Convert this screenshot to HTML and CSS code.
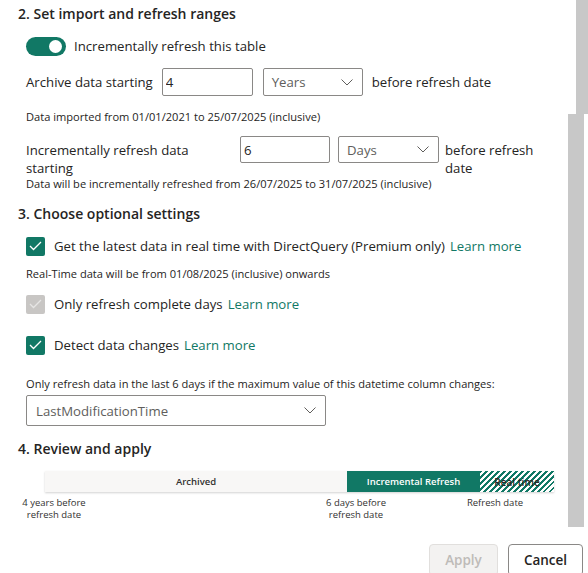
FILE: index.html
```html
<!DOCTYPE html>
<html lang="en">
<head>
  <meta charset="UTF-8">
  <meta name="viewport" content="width=device-width, initial-scale=1.0">
  <title>Incremental refresh and real-time data</title>
  <link rel="stylesheet" href="styles.css">
</head>
<body>

  <div class="panel">

    <!-- Step 2: ranges -->
    <h2 class="step step-first">2. Set import and refresh ranges</h2>

    <div class="toggle-row">
      <span class="toggle"><span class="knob"></span></span>
      <span>Incrementally refresh this table</span>
    </div>

    <div class="range-row">
      <label class="range-label">Archive data starting</label>
      <input type="text" class="num-input" value="4">
      <div class="dropdown dropdown-unit">
        <span>Years</span>
        <svg width="12" height="7" viewBox="0 0 12 7"><path d="M0.5 0.5 L6 6 L11.5 0.5" fill="none" stroke="#605e5c" stroke-width="1"/></svg>
      </div>
      <span class="after">before refresh date</span>
    </div>

    <p class="note note-archive">Data imported from 01/01/2021 to 25/07/2025 (inclusive)</p>

    <div class="range-row range-wrap">
      <label class="range-label wide">Incrementally refresh data starting</label>
      <input type="text" class="num-input" value="6">
      <div class="dropdown dropdown-unit">
        <span>Days</span>
        <svg width="12" height="7" viewBox="0 0 12 7"><path d="M0.5 0.5 L6 6 L11.5 0.5" fill="none" stroke="#605e5c" stroke-width="1"/></svg>
      </div>
      <span class="after narrow">before refresh date</span>
    </div>

    <p class="note note-incr">Data will be incrementally refreshed from 26/07/2025 to 31/07/2025 (inclusive)</p>

    <!-- Step 3: optional settings -->
    <h2 class="step">3. Choose optional settings</h2>

    <div class="check-row first-check">
      <span class="checkbox checked">
        <svg width="13" height="10" viewBox="0 0 13 10"><path d="M1 5 L4.5 8.5 L12 1" fill="none" stroke="#fff" stroke-width="1.3"/></svg>
      </span>
      <span>Get the latest data in real time with DirectQuery (Premium only)</span>
      <a class="learn">Learn more</a>
    </div>

    <p class="note note-rt">Real-Time data will be from 01/08/2025 (inclusive) onwards</p>

    <div class="check-row second-check">
      <span class="checkbox disabled">
        <svg width="13" height="10" viewBox="0 0 13 10"><path d="M1 5 L4.5 8.5 L12 1" fill="none" stroke="#e6e5e4" stroke-width="1.3"/></svg>
      </span>
      <span>Only refresh complete days</span>
      <a class="learn">Learn more</a>
    </div>

    <div class="check-row third-check">
      <span class="checkbox checked">
        <svg width="13" height="10" viewBox="0 0 13 10"><path d="M1 5 L4.5 8.5 L12 1" fill="none" stroke="#fff" stroke-width="1.3"/></svg>
      </span>
      <span>Detect data changes</span>
      <a class="learn">Learn more</a>
    </div>

    <p class="note note-col">Only refresh data in the last 6 days if the maximum value of this datetime column changes:</p>

    <div class="dropdown dropdown-column">
      <span>LastModificationTime</span>
      <svg width="12" height="7" viewBox="0 0 12 7"><path d="M0.5 0.5 L6 6 L11.5 0.5" fill="none" stroke="#605e5c" stroke-width="1"/></svg>
    </div>

    <!-- Step 4: timeline -->
    <h2 class="step">4. Review and apply</h2>

    <div class="timeline">
      <div class="seg seg-archived">Archived</div>
      <div class="seg seg-incr">Incremental Refresh</div>
      <div class="seg seg-rt">Real time</div>
    </div>

    <div class="marks">
      <span class="mark mark-1">4 years before refresh date</span>
      <span class="mark mark-2">6 days before refresh date</span>
      <span class="mark mark-3">Refresh date</span>
    </div>

    <div class="footer">
      <button class="btn btn-apply" disabled>Apply</button>
      <button class="btn btn-cancel">Cancel</button>
    </div>
  </div>

  <!-- dialog scrollbars -->
  <div class="scroll scroll-outer"></div>
  <div class="scroll scroll-inner"></div>

</body>
</html>
```

FILE: styles.css
```css
body {
  margin: 0;
  padding: 0;
  background-color: #fff;
  font-family: "Open Sans", "Noto Sans", sans-serif;
  color: #252423;
  font-size: 13.2px;
  overflow: hidden;
  height: 573px;
  position: relative;
}

.panel {
  padding-left: 18px;
  display: flex;
  flex-direction: column;
}

.step {
  margin: 13px 0 0 0;
  font-size: 14px;
  font-weight: 600;
  line-height: 20px;
  height: 20px;
}

.step-first {
  margin-top: 4px;
}

.toggle-row {
  display: flex;
  align-items: center;
  margin: 12px 0 0 8px;
  height: 20px;
}

.toggle {
  width: 40px;
  height: 19px;
  border-radius: 10px;
  background-color: #117865;
  margin-right: 8px;
  display: flex;
  align-items: center;
  justify-content: flex-end;
}

.knob {
  width: 13px;
  height: 13px;
  border-radius: 50%;
  background-color: #fff;
  margin-right: 4px;
}

.range-row {
  display: flex;
  align-items: center;
  margin: 12px 0 0 8px;
  height: 28px;
}

.range-label {
  margin-right: 9px;
}

.num-input {
  width: 91px;
  height: 28px;
  box-sizing: border-box;
  border: 1px solid #8a8886;
  border-radius: 2px;
  padding: 0 3px;
  font-family: inherit;
  font-size: 13.2px;
  color: #252423;
  margin: 0;
}

.dropdown {
  display: flex;
  align-items: center;
  justify-content: space-between;
  box-sizing: border-box;
  border: 1px solid #8a8886;
  border-radius: 2px;
  color: #605e5c;
  padding: 0 9px 0 8px;
}

.dropdown-unit {
  width: 100px;
  height: 28px;
  margin-left: 10px;
}

.after {
  margin-left: 9px;
}

.range-wrap {
  align-items: flex-start;
  height: auto;
  margin-top: 11px;
}

.range-wrap .range-label {
  width: 206px;
  margin-right: 8px;
  line-height: 18px;
  padding-top: 5px;
}

.range-wrap .dropdown-unit {
  width: 101px;
  height: 27px;
  margin-left: 8px;
}

.range-wrap .num-input {
  height: 27px;
  width: 90px;
}

.range-wrap .after {
  width: 96px;
  line-height: 18px;
  padding-top: 5px;
  margin-left: 6px;
}

.note {
  margin: 0 0 0 8px;
  font-size: 11.1px;
  line-height: 16px;
}

.note-archive {
  margin-top: 13px;
}

.note-incr {
  line-height: 14px;
}

.note-rt {
  margin-top: 10px;
}

.note-col {
  margin-top: 21px;
}

.check-row {
  display: flex;
  align-items: center;
  margin-left: 8px;
  height: 20px;
}

.first-check {
  margin-top: 12px;
}

.second-check {
  margin-top: 12px;
}

.third-check {
  margin-top: 21px;
}

.checkbox {
  width: 19px;
  height: 19px;
  box-sizing: border-box;
  border-radius: 2px;
  margin-right: 9px;
  display: flex;
  align-items: center;
  justify-content: center;
}

.checkbox.checked {
  background-color: #117865;
}

.checkbox.disabled {
  background-color: #c8c6c4;
}

.learn {
  color: #117865;
  margin-left: 5px;
}

.dropdown-column {
  width: 300px;
  height: 31px;
  margin: 3px 0 0 8px;
  padding: 0 9px 0 9px;
}

.timeline {
  display: flex;
  margin: 12px 0 0 27px;
  width: 509px;
  height: 21px;
  box-shadow: 0 1px 2px rgba(0, 0, 0, 0.18);
  font-size: 9.5px;
  font-weight: 600;
}

.seg {
  display: flex;
  align-items: center;
  justify-content: center;
}

.seg-archived {
  width: 302px;
  background-color: #f8f7f6;
  color: #323130;
}

.seg-incr {
  width: 133px;
  background-color: #117865;
  color: #fff;
}

.seg-rt {
  width: 74px;
  color: #2b2624;
  font-size: 10px;
  background: repeating-linear-gradient(135deg, #117865 0, #117865 2px, #fff 2px, #fff 4.2px);
}

.marks {
  display: flex;
  align-items: flex-start;
  margin-top: 5px;
  font-size: 9.5px;
  line-height: 12px;
  color: #323130;
  text-align: center;
}

.mark {
  width: 76px;
}

.mark-1 {
  margin-left: -2px;
}

.mark-2 {
  margin-left: 226px;
}

.mark-3 {
  margin-left: 63px;
}

.footer {
  display: flex;
  justify-content: flex-end;
  margin: 23px 0 0 0;
  padding-right: 5px;
}

.btn {
  height: 32px;
  box-sizing: border-box;
  border-radius: 4px;
  font-family: inherit;
  font-size: 13.5px;
  font-weight: 600;
  margin-left: 10px;
}

.btn-apply {
  width: 69px;
  background-color: #f3f2f1;
  color: #bebbb8;
  border: 1px solid #e1dfdd;
}

.btn-cancel {
  width: 75px;
  background-color: #fff;
  color: #252423;
  border: 1px solid #8a8886;
}

/* scrollbars of the dialog body */
.scroll {
  position: absolute;
  background-color: #c8c8c8;
}

.scroll-outer {
  left: 576px;
  top: 0;
  width: 12px;
  height: 114px;
}

.scroll-inner {
  left: 568px;
  top: 114px;
  width: 16px;
  height: 413px;
}
```
